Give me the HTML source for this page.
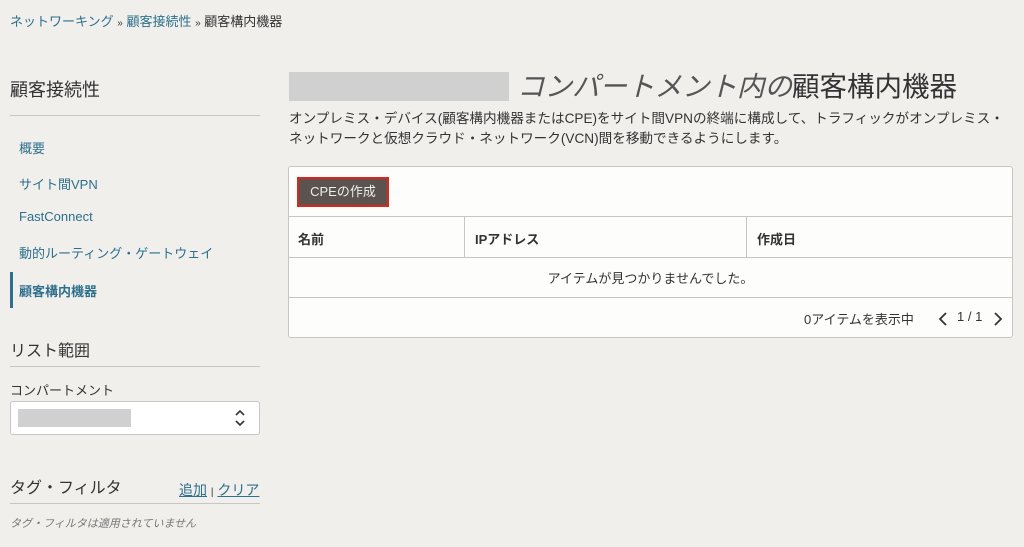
<!DOCTYPE html>
<html><head><meta charset="utf-8"><style>
*{margin:0;padding:0;box-sizing:border-box}
body{width:1024px;height:547px;background:#f0efec;font-family:"Liberation Sans","Noto Sans CJK JP",sans-serif;color:#333;position:relative;overflow:hidden}
.a{position:absolute;white-space:nowrap}
.link{color:#2d6f8c}
.hr{position:absolute;height:1px;background:#c8c6c2}
</style></head><body>
<div class="a" style="left:10px;top:11px;font-size:13px"><span class="link">ネットワーキング</span> <span style="font-size:10px">»</span> <span class="link">顧客接続性</span> <span style="font-size:10px">»</span> 顧客構内機器</div>

<div class="a" style="left:10px;top:76px;font-size:18px;color:#333">顧客接続性</div>
<div class="hr" style="left:10px;top:115px;width:250px"></div>
<div class="a link" style="left:19px;top:138px;font-size:13px">概要</div>
<div class="a link" style="left:19px;top:174px;font-size:13px">サイト間VPN</div>
<div class="a link" style="left:19px;top:209px;font-size:13px">FastConnect</div>
<div class="a link" style="left:19px;top:243px;font-size:13px">動的ルーティング・ゲートウェイ</div>
<div class="a" style="left:10px;top:272px;width:3px;height:36px;background:#2d6f8c"></div>
<div class="a link" style="left:19px;top:281px;font-size:13px;font-weight:bold">顧客構内機器</div>

<div class="a" style="left:10px;top:337px;font-size:16px">リスト範囲</div>
<div class="hr" style="left:10px;top:366px;width:250px"></div>
<div class="a" style="left:10px;top:380px;font-size:13px">コンパートメント</div>
<div class="a" style="left:10px;top:401px;width:250px;height:34px;background:#fff;border:1px solid #c8c6c2;border-radius:3px"></div>
<div class="a" style="left:18px;top:409px;width:113px;height:18px;background:#d0d0d0"></div>
<svg class="a" style="left:234px;top:409px" width="12" height="18" viewBox="0 0 12 18"><path d="M2 6L6 2L10 6M2 12L6 16L10 12" fill="none" stroke="#333" stroke-width="1.6"/></svg>

<div class="a" style="left:10px;top:474px;font-size:16px">タグ・フィルタ</div>
<div class="a" style="left:179px;top:480px;font-size:14px"><span class="link" style="text-decoration:underline">追加</span> <span style="font-size:10px">|</span> <span class="link" style="text-decoration:underline">クリア</span></div>
<div class="hr" style="left:10px;top:503px;width:250px"></div>
<div class="a" style="left:10px;top:515px;font-size:11px;font-style:italic;color:#777">タグ・フィルタは適用されていません</div>

<div class="a" style="left:289px;top:72px;width:220px;height:29px;background:#d0d0d0"></div>
<div class="a" style="left:517px;top:64px;font-size:27.5px;color:#333"><i style="color:#555">コンパートメント内の</i>顧客構内機器</div>
<div class="a" style="left:289px;top:109px;font-size:13.6px;line-height:20px">オンプレミス・デバイス(顧客構内機器またはCPE)をサイト間VPNの終端に構成して、トラフィックがオンプレミス・<br>ネットワークと仮想クラウド・ネットワーク(VCN)間を移動できるようにします。</div>

<div class="a" style="left:288px;top:166px;width:725px;height:172px;background:#fdfdfc;border:1px solid #c8c6c2;border-radius:3px"></div>
<div class="a" style="left:297px;top:177px;width:92px;height:30px;border:2px solid #e0241b;background:#5a5350;color:#eee;font-size:13px;text-align:center;line-height:26px">CPEの作成</div>
<div class="hr" style="left:289px;top:216px;width:723px"></div>
<div class="a" style="left:464px;top:216px;width:1px;height:41px;background:#c8c6c2"></div>
<div class="a" style="left:746px;top:216px;width:1px;height:41px;background:#c8c6c2"></div>
<div class="a" style="left:298px;top:229px;font-size:13px;font-weight:bold">名前</div>
<div class="a" style="left:475px;top:229px;font-size:13px;font-weight:bold">IPアドレス</div>
<div class="a" style="left:757px;top:229px;font-size:13px;font-weight:bold">作成日</div>
<div class="hr" style="left:289px;top:257px;width:723px"></div>
<div class="a" style="left:289px;top:268px;width:723px;text-align:center;font-size:13px">アイテムが見つかりませんでした。</div>
<div class="hr" style="left:289px;top:297px;width:723px"></div>
<div class="a" style="left:804px;top:309px;font-size:13px">0アイテムを表示中</div>
<svg class="a" style="left:938px;top:311px" width="10" height="16" viewBox="0 0 10 16"><path d="M8 2L2 8L8 14" fill="none" stroke="#333" stroke-width="1.8"/></svg>
<div class="a" style="left:957px;top:309px;font-size:13px">1 / 1</div>
<svg class="a" style="left:993px;top:311px" width="10" height="16" viewBox="0 0 10 16"><path d="M2 2L8 8L2 14" fill="none" stroke="#333" stroke-width="1.8"/></svg>
</body></html>
